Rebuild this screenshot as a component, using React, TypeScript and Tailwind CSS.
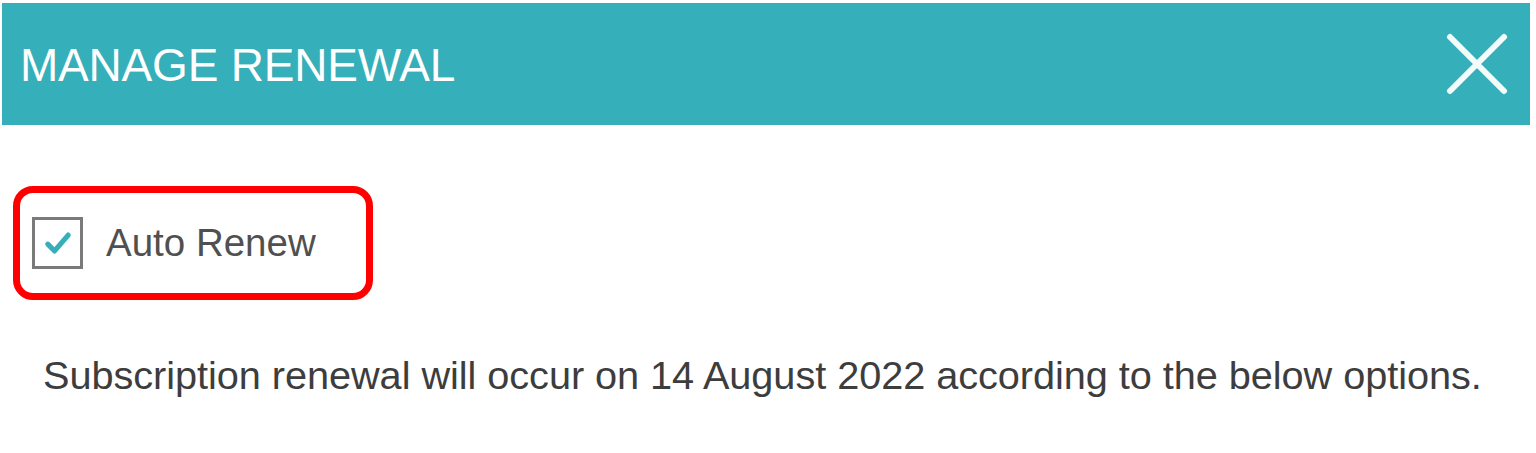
export default function App() {
  return (
    <div className="w-[1536px] h-[453px] bg-white overflow-hidden" style={{ fontFamily: '"Liberation Sans", Arial, sans-serif' }}>
      {/* Header */}
      <div className="mt-[3px] ml-[2px] w-[1528px] h-[122px] bg-[#35afb9] flex items-center justify-between pl-[18px] pr-[22px]">
        <h1 className="text-white text-[46px] leading-none tracking-[-0.2px] pt-[2px]">MANAGE RENEWAL</h1>
        <button className="w-[62px] h-[62px] flex items-center justify-center">
          <svg viewBox="0 0 62 62" className="w-[62px] h-[62px]">
            <path d="M4 4 L58 58 M58 4 L4 58" stroke="#f4fbfb" strokeWidth="6" strokeLinecap="round" fill="none" />
          </svg>
        </button>
      </div>

      {/* Body */}
      <div className="pl-[13px] pt-[61px]">
        <div className="w-[360px] h-[114px] border-[7px] border-[#ff0000] rounded-[20px] flex items-center pl-[12px] gap-[23px]">
          <div className="w-[51px] h-[52px] border-[3px] border-[#7a7a7a] flex items-center justify-center">
            <svg viewBox="0 0 30 30" className="w-[34px] h-[34px]">
              <path d="M6 16 L12 22 L24 8" stroke="#35afb9" strokeWidth="4.5" strokeLinecap="round" strokeLinejoin="round" fill="none" />
            </svg>
          </div>
          <span className="text-[38.5px] text-[#505050] leading-none">Auto Renew</span>
        </div>
        <p className="mt-[56px] ml-[30px] text-[39.7px] text-[#3d3d3d] leading-none whitespace-nowrap tracking-[-0.05px]">
          Subscription renewal will occur on 14 August 2022 according to the below options.
        </p>
      </div>
    </div>
  );
}
